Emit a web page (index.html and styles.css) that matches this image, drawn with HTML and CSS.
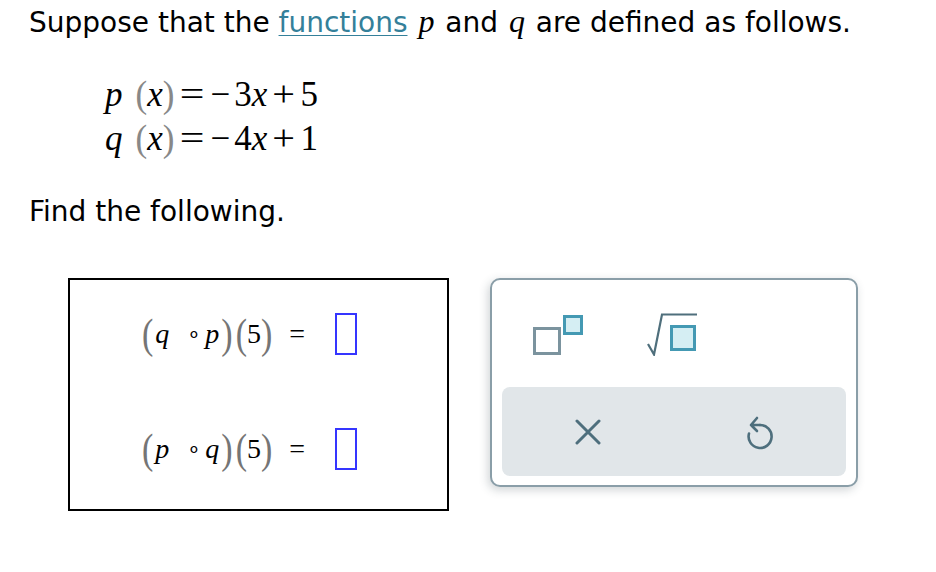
FILE: index.html
```html
<!DOCTYPE html>
<html lang="en">
<head>
<meta charset="utf-8">
<title>Function composition</title>
<link rel="stylesheet" href="styles.css">
</head>
<body>
<p class="intro">Suppose that the <a class="link" href="#">functions</a> <i class="mv">p</i> and <i class="mv">q</i> are defined as follows.</p>
<div class="defs">
  <div class="def"><i class="it">p</i><span class="gp gp-l">(</span><i class="it">x</i><span class="gp">)</span><span class="op eq">=</span><span class="op neg">−</span>3<i class="it">x</i><span class="op plus">+</span>5</div>
  <div class="def"><i class="it">q</i><span class="gp gp-l">(</span><i class="it">x</i><span class="gp">)</span><span class="op eq">=</span><span class="op neg">−</span>4<i class="it">x</i><span class="op plus">+</span>1</div>
</div>
<p class="find">Find the following.</p>
<div class="work">
  <div class="answers">
    <div class="row">
      <span class="expr"><span class="bp">(</span><i class="it">q</i><span class="circ">∘</span><i class="it">p</i><span class="bp">)</span><span class="bp bp-gap">(</span>5<span class="bp">)</span><span class="req">=</span></span>
      <span class="blank"></span>
    </div>
    <div class="row">
      <span class="expr"><span class="bp">(</span><i class="it">p</i><span class="circ">∘</span><i class="it">q</i><span class="bp">)</span><span class="bp bp-gap">(</span>5<span class="bp">)</span><span class="req">=</span></span>
      <span class="blank"></span>
    </div>
  </div>
  <div class="pad">
    <div class="tools">
      <button class="tool" aria-label="superscript">
        <svg width="50" height="40" viewBox="0 0 50 40">
          <rect x="1.5" y="13.5" width="25" height="25" fill="#fff" stroke="#7b939e" stroke-width="3"/>
          <rect x="31.5" y="1.5" width="17" height="17" fill="#d5eef3" stroke="#4499b3" stroke-width="3"/>
        </svg>
      </button>
      <button class="tool" aria-label="square root">
        <svg width="51" height="43" viewBox="0 0 51 43">
          <path d="M1 31 L7 41.5 L15 1.5 H50" fill="none" stroke="#4f6f7c" stroke-width="2.2"/>
          <rect x="24.5" y="13.5" width="23" height="23" fill="#d5eef3" stroke="#4499b3" stroke-width="3"/>
        </svg>
      </button>
    </div>
    <div class="actions">
      <button class="act" aria-label="clear">
        <svg width="26" height="26" viewBox="0 0 26 26">
          <path d="M2 2 L24 24 M24 2 L2 24" stroke="#4e6f7d" stroke-width="3" stroke-linecap="round"/>
        </svg>
      </button>
      <button class="act" aria-label="undo">
        <svg width="32" height="40" viewBox="0 0 32 40">
          <path d="M16 13 A11.5 11.5 0 1 1 5 21.5" fill="none" stroke="#4e6f7d" stroke-width="2.6" stroke-linecap="round"/>
          <path d="M13 6 L7 13 L13 19 M7 13 H16" fill="none" stroke="#4e6f7d" stroke-width="2.6" stroke-linecap="round" stroke-linejoin="round"/>
        </svg>
      </button>
    </div>
  </div>
</div>
</body>
</html>
```

FILE: styles.css
```css
html, body {
  margin: 0;
  padding: 0;
  background: #fff;
}
body {
  font-family: "DejaVu Sans", Verdana, sans-serif;
  color: #000;
  width: 936px;
  height: 572px;
  overflow: hidden;
}
.it,
.mv {
  font-family: "Liberation Serif", "Times New Roman", serif;
  font-style: italic;
}
.intro {
  margin: 0;
  padding: 4px 0 0 29px;
  font-size: 28px;
  line-height: 34px;
  height: 38px;
  white-space: nowrap;
}
.link {
  color: #34809a;
  text-decoration: underline;
  text-underline-offset: 3px;
  text-decoration-thickness: 1px;
}
.mv {
  font-size: 32px;
  margin: 0 2px;
}
.defs {
  padding: 31px 0 0 105px;
  font-family: "Liberation Serif", "Times New Roman", serif;
  font-size: 35px;
}
.def {
  height: 44px;
  line-height: 44px;
  white-space: nowrap;
}
.gp {
  color: #888;
  font-style: normal;
  display: inline-block;
  transform: scaleY(1.08);
}
.gp-l {
  margin-left: 13px;
}
.op {
  display: inline-block;
  text-align: center;
}
.eq {
  width: 36px;
  transform: scaleX(1.25);
}
.neg {
  width: 20px;
  margin-right: 4px;
}
.plus {
  width: 33px;
  transform: scaleX(1.15);
}
.find {
  margin: 0;
  padding-top: 34px;
  padding-left: 29px;
  font-size: 28px;
  line-height: 34px;
}
.work {
  display: flex;
  align-items: flex-start;
  gap: 41px;
  margin-top: 49px;
  padding-left: 68px;
}
.answers {
  box-sizing: border-box;
  width: 381px;
  height: 233px;
  border: 2px solid #000;
  display: flex;
  flex-direction: column;
  padding: 33px 0 0 72px;
  gap: 73px;
}
.row {
  display: flex;
  align-items: center;
  height: 42px;
}
.expr {
  font-family: "Liberation Serif", "Times New Roman", serif;
  font-size: 28px;
  display: flex;
  align-items: center;
}
.bp {
  color: #757575;
  font-size: 34px;
  display: inline-block;
  transform: scaleY(1.25);
  line-height: 42px;
}
.bp-gap {
  margin-left: 3px;
}
.expr .it {
  padding: 0 2px;
}
.circ {
  display: inline-block;
  width: 13px;
  text-align: center;
  font-size: 22px;
  margin: 0 3px 0 16px;
}
.req {
  margin-left: 17px;
}
.blank {
  box-sizing: border-box;
  width: 22px;
  height: 42px;
  border: 2px solid #3535ff;
  margin-left: 30px;
}
.pad {
  box-sizing: border-box;
  width: 368px;
  height: 209px;
  border: 2px solid #8a9ea8;
  border-radius: 10px;
  box-shadow: -2px 3px 10px rgba(40, 60, 70, 0.22);
  padding: 0 10px 9px 10px;
  display: flex;
  flex-direction: column;
  background: #fff;
}
.tools {
  display: grid;
  grid-template-columns: 115px 115px 115px;
  height: 107px;
  margin-left: -2px;
}
.tool {
  border: 0;
  background: none;
  padding: 0;
  display: flex;
  align-items: center;
  justify-content: center;
}
.tool svg {
  display: block;
  margin-top: 2px;
}
.actions {
  flex: 1;
  background: #e1e6e9;
  border-radius: 8px;
  display: grid;
  grid-template-columns: 1fr 1fr;
}
.act {
  border: 0;
  background: none;
  padding: 0;
  display: flex;
  align-items: center;
  justify-content: center;
}
.act svg {
  display: block;
}
```
